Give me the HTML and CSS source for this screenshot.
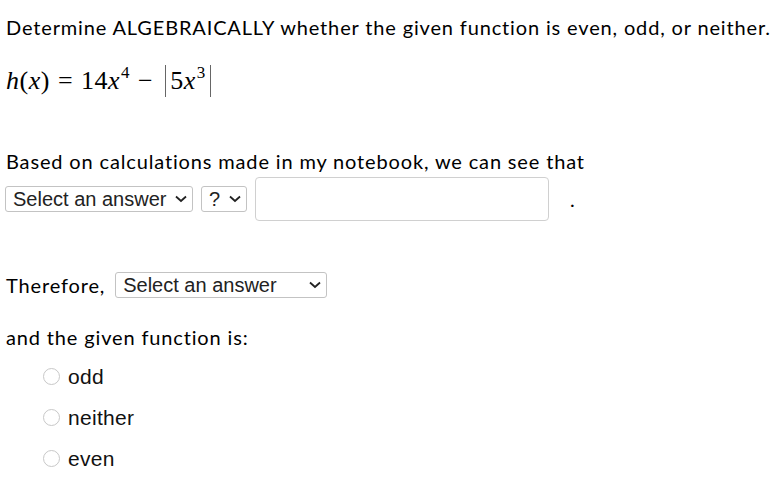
FILE: index.html
```html
<!DOCTYPE html>
<html>
<head>
<meta charset="utf-8">
<link rel="stylesheet" href="styles.css">
</head>
<body>
<div class="page">
  <p class="line first">Determine ALGEBRAICALLY whether the given function is even, odd, or neither.</p>
  <p class="math"><i>h</i>(<i>x</i>)<span class="op">=</span>14<i>x</i><sup>4</sup><span class="op">−</span><span class="bar"></span>5<i>x</i><sup>3</sup><span class="bar"></span></p>
  <p class="line based">Based on calculations made in my notebook, we can see that</p>
  <div class="row">
    <span class="selwrap"><select class="sel sel-a"><option>Select an answer</option></select><svg class="chev" width="12" height="8" viewBox="0 0 12 8"><path d="M1 1.5 L6 6 L11 1.5" fill="none" stroke="#222" stroke-width="1.8"/></svg></span>
    <span class="selwrap"><select class="sel sel-q"><option>?</option></select><svg class="chev" width="12" height="8" viewBox="0 0 12 8"><path d="M1 1.5 L6 6 L11 1.5" fill="none" stroke="#222" stroke-width="1.8"/></svg></span>
    <input class="txt" type="text">
    <span class="dot">.</span>
  </div>
  <div class="row therefore">
    <span class="line">Therefore,</span>
    <span class="selwrap"><select class="sel sel-b"><option>Select an answer</option></select><svg class="chev" width="12" height="8" viewBox="0 0 12 8"><path d="M1 1.5 L6 6 L11 1.5" fill="none" stroke="#222" stroke-width="1.8"/></svg></span>
  </div>
  <p class="line given">and the given function is:</p>
  <ul class="radios">
    <li><span class="radio"></span><span class="lbl">odd</span></li>
    <li><span class="radio"></span><span class="lbl">neither</span></li>
    <li><span class="radio"></span><span class="lbl">even</span></li>
  </ul>
</div>
</body>
</html>
```
FILE: styles.css
```css
html, body { margin: 0; padding: 0; background: #fff; }
.page {
  padding: 0 6px;
  font-family: Lato, "Liberation Sans", sans-serif;
  font-size: 20px;
  letter-spacing: 0.85px;
  color: #000;
}
p { margin: 0; }
.line { line-height: 24px; }
.first { padding-top: 15px; }
.math {
  margin-top: 26px;
  font-family: "Liberation Serif", "DejaVu Serif", serif;
  font-size: 26px;
  line-height: 30px;
  letter-spacing: 0.5px;
  white-space: nowrap;
}
.math i { font-style: italic; }
.math .op { margin: 0 8px; }
.math sup { font-size: 17px; line-height: 0; vertical-align: 11px; margin-left: 1px; }
.math .bar {
  display: inline-block;
  width: 1px;
  height: 32px;
  background: #666;
  margin: 0 4px;
  vertical-align: -8px;
}
.based { margin-top: 52px; }
.row { display: flex; align-items: center; gap: 8px; }
.row:not(.therefore) { margin-top: 4px; }
.selwrap { position: relative; display: inline-flex; }
.sel {
  -webkit-appearance: none;
  appearance: none;
  font-family: "Liberation Sans", Arial, sans-serif;
  font-size: 20px;
  letter-spacing: 0;
  color: #222;
  height: 26px;
  border: 1px solid #c3c3c3;
  border-radius: 3px;
  background: #fff;
  padding: 0 2px 0 7px;
  margin: 0;
}
.chev { position: absolute; right: 6px; top: 9px; pointer-events: none; }
.sel-a { width: 188px; margin-left: -1px; }
.sel-q { width: 46px; }
.sel-b { width: 212px; }
.txt {
  width: 294px;
  height: 44px;
  box-sizing: border-box;
  border: 1px solid #d0d0d0;
  border-radius: 4px;
  margin: 0;
}
.dot { margin-left: 13px; font-size: 20px; }
.therefore { margin-top: 51px; gap: 10px; }
.given { margin-top: 27px; }
.radios { list-style: none; margin: 7px 0 0; padding: 0 0 0 37px; }
.radios li {
  display: flex;
  align-items: center;
  height: 41px;
  font-family: "Liberation Sans", Arial, sans-serif;
  font-size: 21px;
  letter-spacing: 0.3px;
  color: #111;
}
.radio {
  width: 17px;
  height: 17px;
  border: 1px solid #c8c8c8;
  border-radius: 50%;
  box-sizing: border-box;
  margin-right: 8px;
}
```
